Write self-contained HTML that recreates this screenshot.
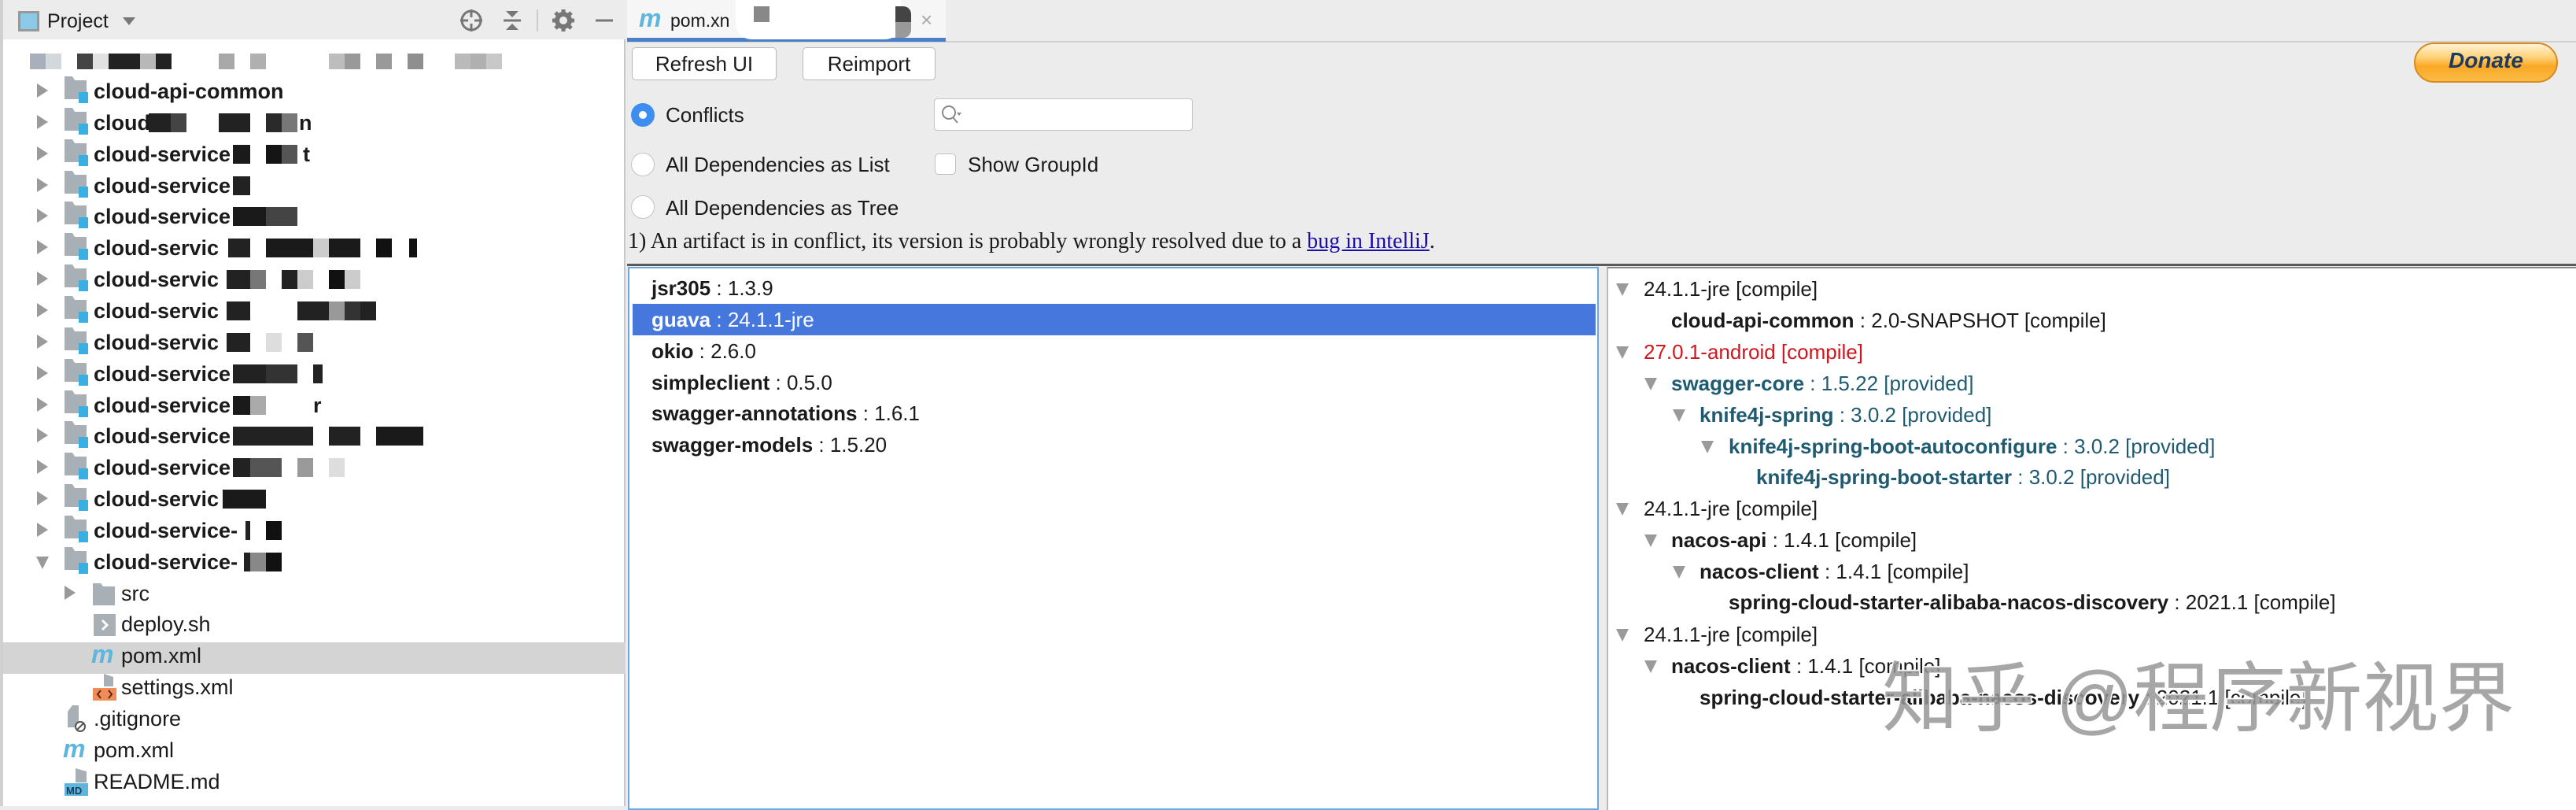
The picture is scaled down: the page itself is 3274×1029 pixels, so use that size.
<!DOCTYPE html>
<html><head><meta charset="utf-8"><style>
*{margin:0;padding:0;box-sizing:border-box}
body{width:3274px;height:1024px;background:#ececec;position:relative;overflow:hidden;font-family:"Liberation Sans","Noto Sans CJK SC",sans-serif;color:#1a1a1a}
.a{position:absolute}
.t{position:absolute;font-size:26px;white-space:nowrap;line-height:30px}
.lt{font-size:27px}
.b{font-weight:bold}
.blk{position:absolute;height:22px}
.arr{position:absolute;width:0;height:0;border-top:9px solid transparent;border-bottom:9px solid transparent;border-left:14px solid #9a9a9a}
.dn{position:absolute;width:0;height:0;border-left:8px solid transparent;border-right:8px solid transparent;border-top:16px solid #9a9a9a}
.radio{position:absolute;width:30px;height:30px;border-radius:50%;background:#fff;border:1px solid #c4c4c4}
.btn{position:absolute;height:42px;background:#fff;border:1px solid #b8b8b8;border-radius:5px;font-size:26px;line-height:40px;text-align:center}
.teal{color:#1f5b70}
</style></head><body>

<div class="a" style="left:0;top:0;width:795px;height:1024px;background:#fff;border-right:2px solid #c8c8c8"></div>
<div class="a" style="left:0;top:0;width:795px;height:50px;background:#ececec"></div>
<div class="a" style="left:0;top:0;width:4px;height:1024px;background:#d0d0d0"></div>
<div class="a" style="left:23px;top:14px;width:27px;height:26px;background:#8cc9e6;border:3px solid #999"></div>
<div class="t" style="left:60px;top:12px;font-size:25px">Project</div>
<div class="a" style="left:156px;top:22px;border-left:8px solid transparent;border-right:8px solid transparent;border-top:10px solid #777"></div>
<svg class="a" style="left:580px;top:8px" width="210" height="36" viewBox="0 0 210 36">
 <circle cx="19" cy="18" r="12" fill="none" stroke="#777" stroke-width="3"/>
 <path d="M19 4v10M19 22v10M5 18h10M23 18h10" stroke="#777" stroke-width="3"/>
 <path d="M60 18h22" stroke="#777" stroke-width="3"/>
 <path d="M63 6h16l-8 8zM63 30h16l-8-8z" fill="#777"/>
 <path d="M103 4v28" stroke="#ccc" stroke-width="2"/>
 <circle cx="136" cy="18" r="8" fill="none" stroke="#777" stroke-width="6"/>
 <path d="M136 4v6M136 26v6M122 18h6M144 18h6M126 8l4 4M142 24l4 4M126 28l4-4M142 12l4-4" stroke="#777" stroke-width="5"/>
 <path d="M177 18h22" stroke="#777" stroke-width="3"/>
</svg>
<div class="blk" style="top:68px;left:38px;width:20px;height:20px;background:#a9b0bb"></div>
<div class="blk" style="top:68px;left:58px;width:20px;height:20px;background:#d3d8dd"></div>
<div class="blk" style="top:68px;left:98px;width:20px;height:20px;background:#444"></div>
<div class="blk" style="top:68px;left:118px;width:20px;height:20px;background:#e2e2e2"></div>
<div class="blk" style="top:68px;left:138px;width:40px;height:20px;background:#222"></div>
<div class="blk" style="top:68px;left:178px;width:20px;height:20px;background:#b8b8b8"></div>
<div class="blk" style="top:68px;left:198px;width:20px;height:20px;background:#222"></div>
<div class="blk" style="top:68px;left:278px;width:20px;height:20px;background:#a8a8a8"></div>
<div class="blk" style="top:68px;left:318px;width:20px;height:20px;background:#b0b0b0"></div>
<div class="blk" style="top:68px;left:418px;width:20px;height:20px;background:#bdbdbd"></div>
<div class="blk" style="top:68px;left:438px;width:20px;height:20px;background:#999"></div>
<div class="blk" style="top:68px;left:478px;width:20px;height:20px;background:#999"></div>
<div class="blk" style="top:68px;left:518px;width:20px;height:20px;background:#8f8f8f"></div>
<div class="blk" style="top:68px;left:578px;width:20px;height:20px;background:#bababa"></div>
<div class="blk" style="top:68px;left:598px;width:20px;height:20px;background:#b0b0b0"></div>
<div class="blk" style="top:68px;left:618px;width:20px;height:20px;background:#c8c8c8"></div>

<div class="a" style="left:4px;top:816px;width:791px;height:40px;background:#d4d4d4"></div>

<div id="tree"></div>
<script>
var rows=[
["cloud-api-common",[]],
["cloud",[[189,28,"#222"],[217,20,"#444"],[278,40,"#222"],[338,20,"#2a2a2a"],[358,20,"#777"]],"n",380],
["cloud-service",[[296,22,"#1a1a1a"],[338,20,"#151515"],[358,20,"#555"]],"t",385],
["cloud-service",[[296,22,"#222"]]],
["cloud-service",[[296,42,"#1a1a1a"],[338,40,"#444"]]],
["cloud-servic",[[290,28,"#222"],[338,60,"#1a1a1a"],[398,20,"#ccc"],[418,40,"#1a1a1a"],[478,20,"#111"],[520,10,"#111"]]],
["cloud-servic",[[288,30,"#222"],[318,20,"#777"],[358,20,"#222"],[378,20,"#ccc"],[418,20,"#111"],[438,20,"#ccc"]]],
["cloud-servic",[[288,30,"#222"],[378,40,"#222"],[418,20,"#999"],[438,20,"#333"],[458,20,"#222"]]],
["cloud-servic",[[288,30,"#222"],[338,20,"#ddd"],[378,20,"#555"]]],
["cloud-service",[[296,42,"#222"],[338,40,"#333"],[398,12,"#222"]]],
["cloud-service",[[296,22,"#1a1a1a"],[318,20,"#aaa"]],"r",398],
["cloud-service",[[296,102,"#222"],[418,40,"#222"],[478,60,"#1a1a1a"]]],
["cloud-service",[[296,22,"#222"],[318,40,"#555"],[378,20,"#999"],[418,20,"#ddd"]]],
["cloud-servic",[[283,55,"#1a1a1a"]]],
["cloud-service-",[[312,6,"#222"],[338,20,"#111"]]],
["cloud-service-",[[310,8,"#222"],[318,20,"#888"],[338,20,"#111"]]]
];
var h="";
function cy(i){return 117+39.85*i;}
rows.forEach(function(r,i){
 var y=cy(i);
 if(i==15) h+='<div class="dn" style="left:46px;top:'+(y-8)+'px"></div>';
 else h+='<div class="arr" style="left:47px;top:'+(y-11)+'px"></div>';
 h+='<svg class="a" style="left:82px;top:'+(y-20)+'px" width="32" height="36"><path d="M0 0h10l3 5h15v24h-28z" fill="#a8afb5"/><rect x="18" y="20" width="12" height="14" fill="#3ab0e2"/></svg>';
 h+='<div class="t lt b" style="left:119px;top:'+(y-16)+'px">'+r[0]+'</div>';
 r[1].forEach(function(b){h+='<div class="blk" style="left:'+b[0]+'px;top:'+(y-13)+'px;width:'+b[1]+'px;height:24px;background:'+b[2]+'"></div>';});
 if(r[2]) h+='<div class="t lt b" style="left:'+r[3]+'px;top:'+(y-16)+'px">'+r[2]+'</div>';
});
var ys=cy(16);
h+='<div class="arr" style="left:82px;top:'+(ys-11)+'px"></div>';
h+='<svg class="a" style="left:118px;top:'+(ys-14)+'px" width="30" height="28"><path d="M0 0h10l3 4h15v24h-28z" fill="#a8afb5"/></svg>';
h+='<div class="t lt" style="left:154px;top:'+(ys-16)+'px">src</div>';
var yd=cy(17);
h+='<svg class="a" style="left:119px;top:'+(yd-14)+'px" width="28" height="28"><rect width="28" height="28" fill="#a8afb5"/><path d="M11 8l6 6-6 6" stroke="#fff" stroke-width="3" fill="none"/></svg>';
h+='<div class="t lt" style="left:154px;top:'+(yd-16)+'px">deploy.sh</div>';
var yp=cy(18);
h+='<div class="t b" style="left:116px;top:'+(yp-18)+'px;color:#5fb6dd;font-style:italic;font-size:32px">m</div>';
h+='<div class="t lt" style="left:154px;top:'+(yp-16)+'px">pom.xml</div>';
var yst=cy(19);
h+='<svg class="a" style="left:118px;top:'+(yst-18)+'px" width="32" height="36"><path d="M14 0v16h12v-12z" fill="#a8afb5"/><rect x="0" y="18" width="30" height="16" fill="#f08b5a"/><path d="M10 21l-4 5 4 5M20 21l4 5-4 5" stroke="#5a2a10" stroke-width="2" fill="none"/></svg>';
h+='<div class="t lt" style="left:154px;top:'+(yst-16)+'px">settings.xml</div>';
var yg=cy(20);
h+='<svg class="a" style="left:84px;top:'+(yg-18)+'px" width="30" height="36"><path d="M8 0h8v28h-14v-20z" fill="#a8afb5"/><circle cx="18" cy="27" r="6" fill="#fff" stroke="#555" stroke-width="2"/><path d="M14 31l8-8" stroke="#555" stroke-width="2"/></svg>';
h+='<div class="t lt" style="left:119px;top:'+(yg-16)+'px">.gitignore</div>';
var yp2=cy(21);
h+='<div class="t b" style="left:80px;top:'+(yp2-18)+'px;color:#5fb6dd;font-style:italic;font-size:32px">m</div>';
h+='<div class="t lt" style="left:119px;top:'+(yp2-16)+'px">pom.xml</div>';
var yr=cy(22);
h+='<svg class="a" style="left:82px;top:'+(yr-18)+'px" width="32" height="36"><path d="M14 0v18h14v-14z" fill="#a8afb5"/><rect x="0" y="19" width="30" height="16" fill="#5fb6dd"/><text x="2" y="33" font-size="13" font-family="Liberation Sans" font-weight="bold" fill="#1a3a5a">MD</text></svg>';
h+='<div class="t lt" style="left:119px;top:'+(yr-16)+'px">README.md</div>';
document.getElementById("tree").innerHTML=h;
</script>

<div class="a" style="left:797px;top:52px;width:2477px;height:2px;background:#cfcfcf"></div>
<div class="a" style="left:797px;top:0;width:405px;height:53px;background:#f6f6f6"></div>
<div class="a" style="left:797px;top:48px;width:405px;height:5px;background:#4a80c8"></div>
<div class="t b" style="left:812px;top:8px;color:#5fb6dd;font-style:italic;font-size:32px">m</div>
<div class="t" style="left:852px;top:11px;font-size:23px">pom.xn</div>
<div class="a" style="left:935px;top:0;width:210px;height:50px;background:#fff;border-radius:0 0 20px 20px"></div>
<div class="a" style="left:958px;top:8px;width:20px;height:20px;background:#888"></div>
<div class="a" style="left:1138px;top:8px;width:20px;height:20px;background:#444;border-radius:0 10px 0 0"></div>
<div class="a" style="left:1138px;top:28px;width:20px;height:20px;background:#999;border-radius:0 0 10px 0"></div>
<div class="t" style="left:1170px;top:10px;color:#aaa;font-size:26px">×</div>

<div class="btn" style="left:803px;top:60px;width:184px">Refresh UI</div>
<div class="btn" style="left:1020px;top:60px;width:169px">Reimport</div>

<div class="a" style="left:3068px;top:54px;width:183px;height:51px;border-radius:26px;border:2px solid #d98a1e;background:linear-gradient(#fff3d6 0%,#ffd27a 35%,#f9a826 60%,#fcbb45 100%)"></div>
<div class="t b" style="left:3068px;top:62px;width:183px;text-align:center;font-style:italic;color:#1e3a5f;font-size:28px">Donate</div>

<div class="radio" style="left:802px;top:131px;background:#3d8ef0;border-color:#3d8ef0"></div>
<div class="a" style="left:812px;top:141px;width:10px;height:10px;border-radius:50%;background:#fff"></div>
<div class="t" style="left:846px;top:131px">Conflicts</div>
<div class="radio" style="left:802px;top:194px"></div>
<div class="t" style="left:846px;top:194px">All Dependencies as List</div>
<div class="radio" style="left:802px;top:248px"></div>
<div class="t" style="left:846px;top:249px">All Dependencies as Tree</div>
<div class="a" style="left:1188px;top:195px;width:27px;height:27px;background:#fff;border:1px solid #c0c0c0;border-radius:5px"></div>
<div class="t" style="left:1230px;top:194px">Show GroupId</div>
<div class="a" style="left:1187px;top:125px;width:329px;height:41px;background:#fff;border:1px solid #c4c4c4;border-radius:4px"></div>
<svg class="a" style="left:1195px;top:131px" width="30" height="30"><circle cx="11" cy="12" r="8" fill="none" stroke="#888" stroke-width="2"/><path d="M16 18l6 7" stroke="#888" stroke-width="2"/><path d="M21 12h6l-3 4z" fill="#888"/></svg>

<div class="t" style="left:798px;top:292px;font-family:'Liberation Serif',serif;font-size:28px">1) An artifact is in conflict, its version is probably wrongly resolved due to a <span style="color:#1a0dab;text-decoration:underline">bug in IntelliJ</span>.</div>

<div class="a" style="left:797px;top:335px;width:2477px;height:3px;background:#5a5a5a"></div>
<div class="a" style="left:798px;top:339px;width:1234px;height:690px;background:#fff;border:2px solid #6ea7db"></div>
<div class="a" style="left:2042px;top:339px;width:1232px;height:690px;background:#fff;border-left:2px solid #b8b8b8;border-top:2px solid #888"></div>

<div class="a" style="left:804px;top:386px;width:1224px;height:40px;background:#4677dc"></div>
<div class="t" style="left:828px;top:351px"><b>jsr305</b> : 1.3.9</div>
<div class="t" style="left:828px;top:391px;color:#fff"><b>guava</b> : 24.1.1-jre</div>
<div class="t" style="left:828px;top:431px"><b>okio</b> : 2.6.0</div>
<div class="t" style="left:828px;top:471px"><b>simpleclient</b> : 0.5.0</div>
<div class="t" style="left:828px;top:510px"><b>swagger-annotations</b> : 1.6.1</div>
<div class="t" style="left:828px;top:550px"><b>swagger-models</b> : 1.5.20</div>

<div class="dn" style="left:2054px;top:360px"></div>
<div class="t" style="left:2089px;top:352px">24.1.1-jre [compile]</div>
<div class="t" style="left:2124px;top:392px"><b>cloud-api-common</b> : 2.0-SNAPSHOT [compile]</div>
<div class="dn" style="left:2054px;top:440px"></div>
<div class="t" style="left:2089px;top:432px;color:#d0161e">27.0.1-android [compile]</div>
<div class="dn" style="left:2090px;top:480px"></div>
<div class="t teal" style="left:2124px;top:472px"><b>swagger-core</b> : 1.5.22 [provided]</div>
<div class="dn" style="left:2126px;top:520px"></div>
<div class="t teal" style="left:2160px;top:512px"><b>knife4j-spring</b> : 3.0.2 [provided]</div>
<div class="dn" style="left:2162px;top:560px"></div>
<div class="t teal" style="left:2197px;top:552px"><b>knife4j-spring-boot-autoconfigure</b> : 3.0.2 [provided]</div>
<div class="t teal" style="left:2232px;top:591px"><b>knife4j-spring-boot-starter</b> : 3.0.2 [provided]</div>
<div class="dn" style="left:2054px;top:639px"></div>
<div class="t" style="left:2089px;top:631px">24.1.1-jre [compile]</div>
<div class="dn" style="left:2090px;top:679px"></div>
<div class="t" style="left:2124px;top:671px"><b>nacos-api</b> : 1.4.1 [compile]</div>
<div class="dn" style="left:2126px;top:719px"></div>
<div class="t" style="left:2160px;top:711px"><b>nacos-client</b> : 1.4.1 [compile]</div>
<div class="t" style="left:2197px;top:750px"><b>spring-cloud-starter-alibaba-nacos-discovery</b> : 2021.1 [compile]</div>
<div class="dn" style="left:2054px;top:799px"></div>
<div class="t" style="left:2089px;top:791px">24.1.1-jre [compile]</div>
<div class="dn" style="left:2090px;top:839px"></div>
<div class="t" style="left:2124px;top:831px"><b>nacos-client</b> : 1.4.1 [compile]</div>
<div class="t" style="left:2160px;top:871px"><b>spring-cloud-starter-alibaba-nacos-discovery</b> : 2021.1 [compile]</div>

<div class="t" style="left:2392px;top:832px;font-size:97px;line-height:112px;color:rgba(150,150,150,0.85);-webkit-text-stroke:3px #fff;paint-order:stroke fill">知乎 @程序新视界</div>
</body></html>
